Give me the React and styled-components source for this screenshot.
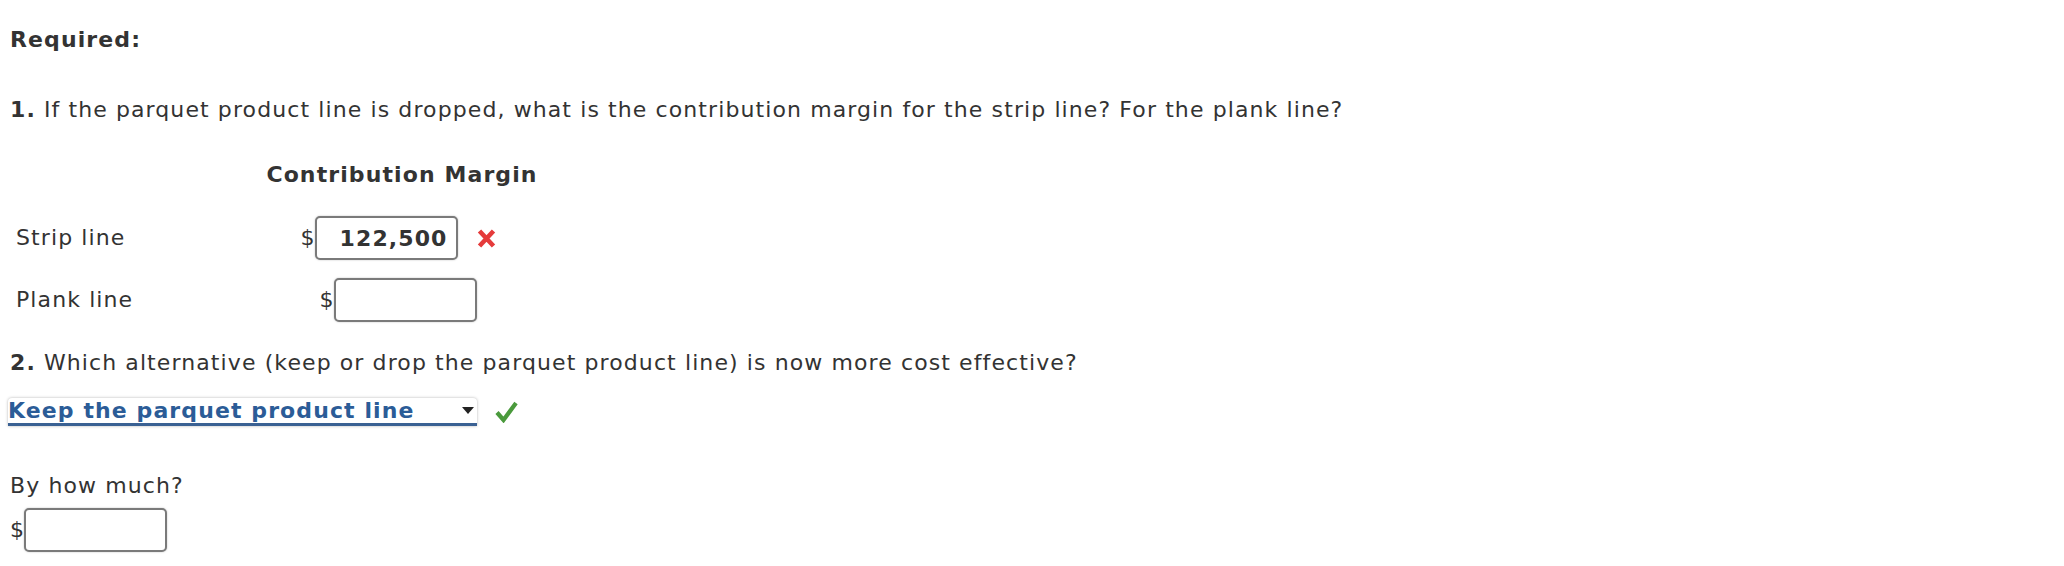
import React from 'react'
import styled, { createGlobalStyle } from 'styled-components'

const GlobalStyle = createGlobalStyle`
  html, body {
    margin: 0;
    padding: 0;
    background: #fff;
  }
  body {
    font-family: "DejaVu Sans", Verdana, sans-serif;
    color: #333;
  }
`

const Page = styled.div`
  width: 2064px;
  height: 566px;
  padding: 24px 0 0 10px;
  box-sizing: border-box;
  font-size: 22px;
  letter-spacing: 1.1px;
`

const Heading = styled.div`
  font-weight: bold;
  line-height: 32px;
`

const Question = styled.p`
  margin: ${({ $top }) => $top || 0}px 0 0 0;
  line-height: 32px;
`

const Num = styled.b`
  margin-right: 8px;
`

const Table = styled.div`
  display: grid;
  grid-template-columns: 226px 320px;
  margin-top: 33px;
  margin-left: 6px;
  row-gap: 18px;
  align-items: center;
`

const HeaderCell = styled.div`
  grid-column: 2;
  text-align: center;
  font-weight: bold;
  line-height: 32px;
  white-space: nowrap;
  margin-bottom: 7px;
`

const Label = styled.div`
  line-height: 32px;
`

const ValueCell = styled.div`
  display: flex;
  align-items: center;
  justify-content: center;
  padding-right: 8px;
`

const Dollar = styled.span`
  line-height: 44px;
  letter-spacing: 0;
`

const Box = styled.div`
  width: 143px;
  height: 44px;
  box-sizing: border-box;
  border: 2px solid #7a7a7a;
  border-radius: 5px;
  box-shadow: 0 0 2px rgba(0, 0, 0, 0.25);
  background: #fff;
  display: flex;
  align-items: center;
  justify-content: flex-end;
  padding-right: 8px;
  font-weight: bold;
  font-size: 22px;
  color: #333;
`

const Mark = styled.span`
  display: inline-flex;
  margin-left: ${({ $gap }) => $gap}px;
`

const SelectRow = styled.div`
  display: flex;
  align-items: center;
  margin-top: 19px;
  margin-left: -2px;
`

const Dropdown = styled.div`
  width: 469px;
  height: 28px;
  box-sizing: border-box;
  display: flex;
  align-items: center;
  justify-content: space-between;
  padding: 0 3px 0 0;
  border-radius: 4px 4px 0 0;
  background: #fff;
  box-shadow: 0 0 3px rgba(0, 0, 0, 0.3);
  border-bottom: 3px solid #3a6193;
  color: #2b5c97;
  font-weight: bold;
  line-height: 22px;
`

const MuchLabel = styled.div`
  margin-top: 44px;
  line-height: 32px;
`

const AmountRow = styled.div`
  display: flex;
  align-items: center;
  margin-top: 6px;
`

const Cross = () => (
  <svg width="19" height="19" viewBox="0 0 19 19">
    <path d="M2.5 2 L16.5 17 M16.5 2 L2.5 17" stroke="#e53b3b" strokeWidth="4.6" strokeLinecap="butt" />
  </svg>
)

const Check = () => (
  <svg width="23" height="22" viewBox="0 0 23 22">
    <path d="M2 11.5 L8.5 19 L21 2" fill="none" stroke="#4a9a3c" strokeWidth="4.2" strokeLinejoin="miter" />
  </svg>
)

const Caret = () => (
  <svg width="12" height="7" viewBox="0 0 12 7">
    <path d="M0 0 H12 L6 7 Z" fill="#222" />
  </svg>
)

const App = () => {
  return (
    <>
      <GlobalStyle />
      <Page>
        <Heading>Required:</Heading>
        <Question $top={38}>
          <Num>1.</Num>If the parquet product line is dropped, what is the contribution margin for the strip line? For the plank line?
        </Question>
        <Table>
          <HeaderCell>Contribution Margin</HeaderCell>
          <Label>Strip line</Label>
          <ValueCell>
            <Dollar>$</Dollar>
            <Box>122,500</Box>
            <Mark $gap={19}><Cross /></Mark>
          </ValueCell>
          <Label>Plank line</Label>
          <ValueCell>
            <Dollar>$</Dollar>
            <Box />
          </ValueCell>
        </Table>
        <Question $top={25}>
          <Num>2.</Num>Which alternative (keep or drop the parquet product line) is now more cost effective?
        </Question>
        <SelectRow>
          <Dropdown>
            <span>Keep the parquet product line</span>
            <Caret />
          </Dropdown>
          <Mark $gap={18}><Check /></Mark>
        </SelectRow>
        <MuchLabel>By how much?</MuchLabel>
        <AmountRow>
          <Dollar>$</Dollar>
          <Box />
        </AmountRow>
      </Page>
    </>
  )
}

export default App
